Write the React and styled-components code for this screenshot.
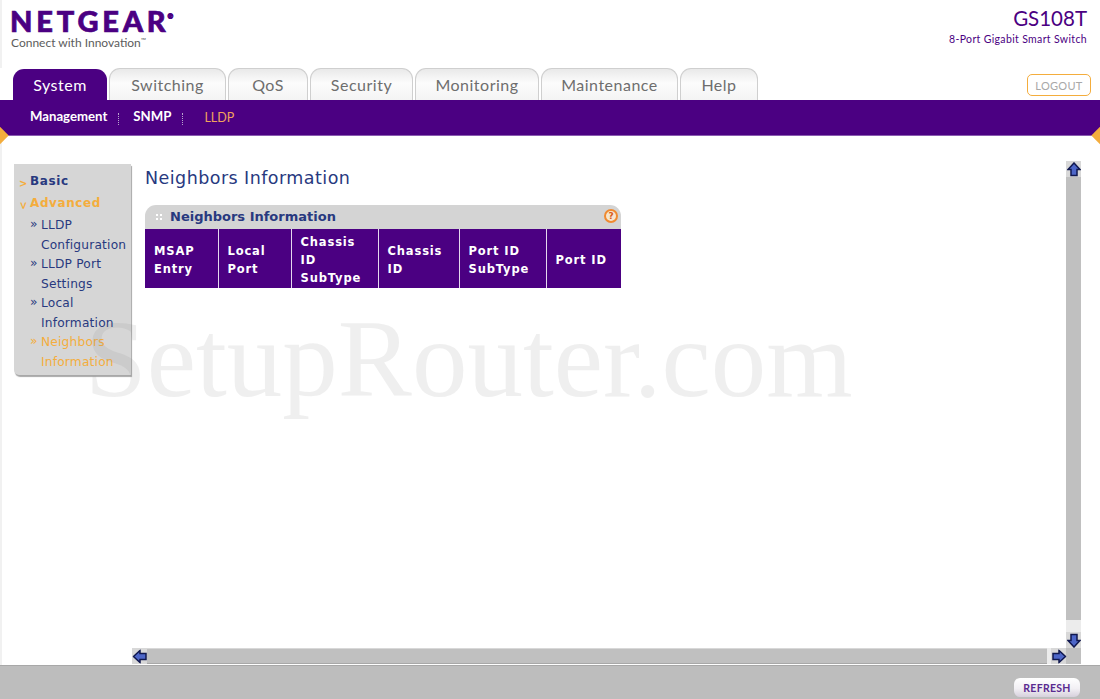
import React from 'react';
import styled, { createGlobalStyle } from 'styled-components';

const PURPLE = '#4b0082';
const NAVY = '#28397f';
const ORANGE = '#f4ad3d';

const GlobalStyle = createGlobalStyle`
    html, body {
        margin: 0;
        padding: 0;
        background: #fff;
    }
    * {
        box-sizing: border-box;
    }
`;

const tabs = [
    { label: 'System', width: 94, active: true },
    { label: 'Switching', width: 117 },
    { label: 'QoS', width: 80 },
    { label: 'Security', width: 103 },
    { label: 'Monitoring', width: 124 },
    { label: 'Maintenance', width: 137 },
    { label: 'Help', width: 78 },
];

const menu = [
    { first: 'LLDP', second: 'Configuration' },
    { first: 'LLDP Port', second: 'Settings' },
    { first: 'Local', second: 'Information' },
    { first: 'Neighbors', second: 'Information', active: true },
];

const columns = [
    { width: 73, lines: ['MSAP', 'Entry'] },
    { width: 73, lines: ['Local', 'Port'] },
    { width: 87, lines: ['Chassis', 'ID', 'SubType'] },
    { width: 81, lines: ['Chassis', 'ID'] },
    { width: 87, lines: ['Port ID', 'SubType'] },
    { width: 75, lines: ['Port ID'] },
];

const ArrowIcon = ({ rotate }) => (
    <svg width="14" height="15" viewBox="0 0 14 15" style={{ transform: `rotate(${rotate}deg)` }}>
        <path d="M7 1 L13 7.5 L10 7.5 L10 13.5 L4 13.5 L4 7.5 L1 7.5 Z" fill="#4d66c8" stroke="#10184f" strokeWidth="1.5" strokeLinejoin="miter" />
    </svg>
);

function App() {
    return (
        <Page>
            <GlobalStyle />
            <Header>
                <Logo>
                    <Wordmark>NETGEAR<Reg>®</Reg></Wordmark>
                    <Tagline>Connect with Innovation<Tm>™</Tm></Tagline>
                </Logo>
                <Product>
                    <ProductName>GS108T</ProductName>
                    <ProductInfo>8-Port Gigabit Smart Switch</ProductInfo>
                </Product>
            </Header>
            <TabRow>
                {tabs.map((tab) => (
                    <Tab key={tab.label} $width={tab.width} $active={tab.active}>{tab.label}</Tab>
                ))}
                <Logout>LOGOUT</Logout>
            </TabRow>
            <SubNav>
                <SubLink>Management</SubLink>
                <Dots />
                <SubLink>SNMP</SubLink>
                <Dots $wide />
                <SubLink $active>LLDP</SubLink>
            </SubNav>
            <Body>
                <Diamond $side="left" />
                <Diamond $side="right" />
                <Sidebar>
                    <SideGroup>
                        <Caret>&gt;</Caret>Basic
                    </SideGroup>
                    <SideGroup $active>
                        <Caret $down>&gt;</Caret>Advanced
                    </SideGroup>
                    {menu.map((item) => (
                        <SideItem key={item.first} $active={item.active}>
                            <Bullet>»</Bullet>
                            {item.first}
                            <br />
                            {item.second}
                        </SideItem>
                    ))}
                </Sidebar>
                <ScrollArea>
                    <ScrollRow>
                        <Content>
                            <Title>Neighbors Information</Title>
                            <Panel>
                                <PanelHead>
                                    <Grip />
                                    <PanelTitle>Neighbors Information</PanelTitle>
                                    <Help>?</Help>
                                </PanelHead>
                                <Table>
                                    <thead>
                                        <tr>
                                            {columns.map((col, i) => (
                                                <Th key={i} $width={col.width}>
                                                    {col.lines.map((line) => <Line key={line}>{line}</Line>)}
                                                </Th>
                                            ))}
                                        </tr>
                                    </thead>
                                </Table>
                            </Panel>
                        </Content>
                        <VScroll>
                            <ScrollButton><ArrowIcon rotate={0} /></ScrollButton>
                            <VTrack />
                            <VGap />
                            <ScrollButton><ArrowIcon rotate={180} /></ScrollButton>
                        </VScroll>
                    </ScrollRow>
                    <HScroll>
                        <ScrollButton><ArrowIcon rotate={-90} /></ScrollButton>
                        <HTrack />
                        <HGap />
                        <ScrollButton><ArrowIcon rotate={90} /></ScrollButton>
                        <Corner />
                    </HScroll>
                </ScrollArea>
            </Body>
            <Footer>
                <Refresh>REFRESH</Refresh>
            </Footer>
            <Watermark>SetupRouter.com</Watermark>
        </Page>
    );
}

const Page = styled.div`
    position: relative;
    width: 1100px;
    height: 699px;
    overflow: hidden;
    display: flex;
    flex-direction: column;
    background: #fff;
    font-family: "DejaVu Sans", sans-serif;
`;

const Header = styled.div`
    height: 68px;
    display: flex;
    justify-content: space-between;
    padding: 7px 13px 0 10px;
    box-shadow: inset 2px 0 #f1f1f1;
`;

const Logo = styled.div`
    display: flex;
    flex-direction: column;
`;

const Wordmark = styled.div`
    font-family: Lato, sans-serif;
    font-weight: 900;
    font-size: 29px;
    line-height: 28px;
    letter-spacing: 3.8px;
    color: ${PURPLE};
    -webkit-text-stroke: 0.7px ${PURPLE};
`;

const Reg = styled.span`
    position: relative;
    top: -13px;
    left: -2px;
    font-size: 7px;
    line-height: 0;
    letter-spacing: 0;
`;

const Tagline = styled.div`
    font-family: Lato, sans-serif;
    font-size: 12px;
    line-height: 14px;
    margin: 1px 0 0 1px;
    color: #5c5c5c;
`;

const Tm = styled.span`
    position: relative;
    top: -4px;
    font-size: 7px;
    line-height: 0;
`;

const Product = styled.div`
    display: flex;
    flex-direction: column;
    align-items: flex-end;
    margin-top: -2px;
`;

const ProductName = styled.div`
    font-family: Lato, sans-serif;
    font-size: 20.5px;
    line-height: 27px;
    color: ${PURPLE};
`;

const ProductInfo = styled.div`
    font-family: Lato, sans-serif;
    font-size: 10.5px;
    line-height: 14px;
    letter-spacing: 0.35px;
    color: ${PURPLE};
`;

const TabRow = styled.div`
    height: 32px;
    display: flex;
    align-items: flex-end;
    gap: 2px;
    padding: 0 9px 0 13px;
`;

const Tab = styled.div`
    width: ${(props) => props.$width}px;
    height: ${(props) => props.$active ? 31 : 32}px;
    border-radius: 11px 11px 0 0;
    display: flex;
    align-items: center;
    justify-content: center;
    font-family: Lato, sans-serif;
    font-size: 16px;
    letter-spacing: 0.5px;
    color: ${(props) => props.$active ? '#fff' : '#6e6e6e'};
    background: ${(props) => props.$active ? PURPLE : 'linear-gradient(#e9e9e9, #fcfcfc 45%, #f4f4f4)'};
    border: ${(props) => props.$active ? 'none' : '1px solid #cfcfcf'};
    border-bottom: none;
`;

const Logout = styled.div`
    margin: 0 0 4px auto;
    width: 64px;
    height: 22px;
    border: 1px solid ${ORANGE};
    border-radius: 5px;
    display: flex;
    align-items: center;
    justify-content: center;
    font-family: Lato, sans-serif;
    font-size: 11px;
    letter-spacing: 0.3px;
    color: #a8a8a8;
    background: #fff;
`;

const SubNav = styled.div`
    height: 36px;
    display: flex;
    align-items: center;
    padding: 0 0 3px 30px;
    background: ${PURPLE};
    border-bottom: 1px solid #8a5bb0;
`;

const SubLink = styled.div`
    font-family: Lato, sans-serif;
    font-weight: ${(props) => props.$active ? 400 : 700};
    font-size: ${(props) => props.$active ? 12.5 : 13.2}px;
    margin-top: ${(props) => props.$active ? 3 : 0}px;
    color: ${(props) => props.$active ? '#f2a35c' : '#fff'};
`;

const Dots = styled.div`
    width: 1px;
    height: 12px;
    margin: 6px ${(props) => props.$wide ? 21 : 14}px 0 11px;
    border-left: 1px dotted #b9a6cc;
`;

const Body = styled.div`
    position: relative;
    height: 529px;
    display: flex;
    background: #fff;
    box-shadow: inset 2px 0 #f1f1f1;
`;

const Diamond = styled.div`
    position: absolute;
    top: -7px;
    ${(props) => props.$side}: -7px;
    width: 13px;
    height: 13px;
    transform: rotate(45deg);
    background: ${ORANGE};
`;

const Sidebar = styled.div`
    width: 117px;
    height: 211px;
    margin: 28px 1px 0 14px;
    padding: 7px 0 0 16px;
    background: #d6d6d6;
    border-radius: 0 0 0 5px;
    box-shadow: 1px 2px 1px #a8a8a8;
    font-size: 12.2px;
    color: ${NAVY};
`;

const SideGroup = styled.div`
    position: relative;
    height: ${(props) => props.$active ? 23 : 22}px;
    line-height: 20px;
    font-weight: 700;
    letter-spacing: 0.6px;
    font-size: 12px;
    color: ${(props) => props.$active ? ORANGE : NAVY};
`;

const Caret = styled.span`
    position: absolute;
    left: -11px;
    top: 3px;
    font-size: 10px;
    font-weight: 700;
    color: ${ORANGE};
    transform: rotate(${(props) => props.$down ? 90 : 0}deg);
`;

const SideItem = styled.div`
    position: relative;
    padding-left: 11px;
    line-height: 19.5px;
    letter-spacing: 0.2px;
    color: ${(props) => props.$active ? ORANGE : NAVY};
`;

const Bullet = styled.span`
    position: absolute;
    left: 0;
    top: -1px;
`;

const ScrollArea = styled.div`
    width: 949px;
    height: 528px;
    padding-top: 25px;
    display: flex;
    flex-direction: column;
`;

const ScrollRow = styled.div`
    flex: 1;
    display: flex;
    min-height: 0;
`;

const Content = styled.div`
    flex: 1;
    padding: 7px 0 0 13px;
`;

const Title = styled.h1`
    margin: 0;
    font-weight: 400;
    font-size: 17.5px;
    line-height: 20px;
    letter-spacing: 0.45px;
    color: ${NAVY};
`;

const Panel = styled.div`
    width: 476px;
    margin-top: 17px;
`;

const PanelHead = styled.div`
    height: 24px;
    display: flex;
    align-items: center;
    padding: 0 3px 2px 10px;
    background: #d4d4d4;
    border-radius: 11px 11px 0 0;
`;

const Grip = styled.span`
    width: 7px;
    height: 7px;
    margin-right: 8px;
    background: radial-gradient(circle, #fff 1px, transparent 1.3px) 0 0 / 4px 4px;
`;

const PanelTitle = styled.span`
    flex: 1;
    font-weight: 700;
    font-size: 13px;
    color: ${NAVY};
`;

const Help = styled.span`
    width: 14px;
    height: 14px;
    border-radius: 50%;
    border: 2px solid #f08a30;
    display: flex;
    align-items: center;
    justify-content: center;
    font-weight: 700;
    font-size: 9px;
    color: #d85a20;
    background: #f6e6cf;
`;

const Table = styled.table`
    width: 476px;
    table-layout: fixed;
    border-collapse: collapse;
`;

const Th = styled.th`
    width: ${(props) => props.$width}px;
    height: 59px;
    padding: 3px 0 0 9px;
    text-align: left;
    vertical-align: middle;
    background: ${PURPLE};
    border-left: 1px solid #e6d9ee;
    color: #fff;
    font-size: 11.5px;
    font-weight: 700;
    letter-spacing: 0.85px;
    &:first-child {
        border-left: none;
    }
`;

const Line = styled.div`
    line-height: 18px;
`;

const VScroll = styled.div`
    width: 15px;
    display: flex;
    flex-direction: column;
`;

const ScrollButton = styled.div`
    width: 15px;
    height: 16px;
    flex: none;
    display: flex;
    align-items: center;
    justify-content: center;
    background: #d8d8d8;
`;

const VTrack = styled.div`
    flex: 1;
    background: #c0c0c0;
`;

const VGap = styled.div`
    height: 12px;
    background: #ececec;
`;

const HScroll = styled.div`
    height: 16px;
    display: flex;
`;

const HTrack = styled.div`
    flex: 1;
    background: #c0c0c0;
    border-top: 1px solid #d8d8d8;
    border-bottom: 1px solid #a8a8a8;
`;

const HGap = styled.div`
    width: 4px;
    background: #ececec;
`;

const Corner = styled.div`
    width: 15px;
    background: #c0c0c0;
`;

const Footer = styled.div`
    height: 34px;
    display: flex;
    justify-content: flex-end;
    align-items: flex-end;
    padding: 0 20px 2px 0;
    background: #bdbdbd;
    border-top: 1px solid #a8a8a8;
`;

const Refresh = styled.div`
    width: 66px;
    height: 19px;
    border-radius: 6px;
    display: flex;
    align-items: center;
    justify-content: center;
    background: linear-gradient(#ffffff, #f2f0f4 55%, #d6d0dc);
    font-family: Lato, sans-serif;
    font-weight: 700;
    font-size: 10.5px;
    letter-spacing: 0.3px;
    color: #5a2a90;
`;

const Watermark = styled.div`
    position: absolute;
    left: 85px;
    top: 299px;
    font-family: "Liberation Serif", serif;
    font-size: 111px;
    line-height: 120px;
    white-space: nowrap;
    color: rgba(120, 120, 120, 0.12);
    pointer-events: none;
`;

export default App;
